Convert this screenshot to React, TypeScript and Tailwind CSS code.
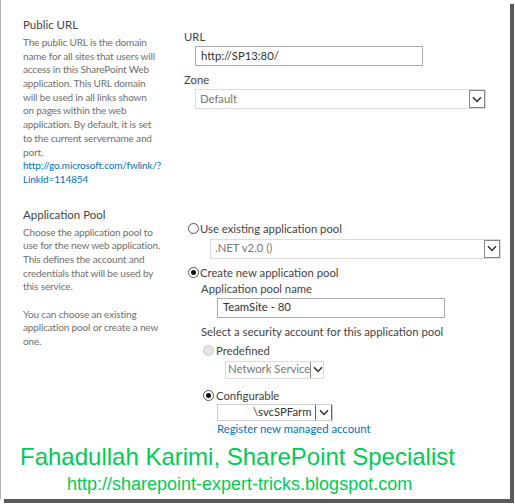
import React from 'react';

const font = { fontFamily: 'Lato, "Open Sans", sans-serif' };
const arial = { fontFamily: '"Liberation Sans", Arial, sans-serif' };

const Chevron = () => (
  <svg width="10" height="7" viewBox="0 0 10 7" fill="none">
    <path d="M1 1.2 L5 5.4 L9 1.2" stroke="#333" strokeWidth="1.5" />
  </svg>
);

const Radio = ({ checked, disabled }: { checked?: boolean; disabled?: boolean }) => (
  <span
    className={
      'w-[11px] h-[11px] rounded-full border flex items-center justify-center shrink-0 ' +
      (disabled ? 'border-[#c8c8c8] bg-[#e4e4e4]' : 'border-[#555] bg-white')
    }
  >
    {checked && <span className="w-[5px] h-[5px] rounded-full bg-[#111]" />}
  </span>
);

const Desc = ({ lines }: { lines: string[] }) => (
  <div className="text-[10px] tracking-[-0.15px] leading-[13.7px] text-[#6f6f6f] whitespace-nowrap">
    {lines.map((l, i) => (
      <div key={i} className="h-[13.7px]">{l}</div>
    ))}
  </div>
);

export default function App() {
  return (
    <div className="w-[515px] h-[504px] bg-white" style={font}>
      <div className="w-[510px] h-[499px] bg-white border-l border-[#b5b5b5] shadow-[4px_4px_0_#5a5a5a] pt-[17px]">
        {/* Public URL section */}
        <div className="flex">
          <div className="w-[183px] pl-[22px]">
            <div className="text-[11.5px] text-[#444] leading-[16px] mb-[3px]">Public URL</div>
            <Desc
              lines={[
                'The public URL is the domain',
                'name for all sites that users will',
                'access in this SharePoint Web',
                'application.  This URL domain',
                'will be used in all links shown',
                'on pages within the web',
                'application.  By default, it is set',
                'to the current servername and',
                'port.',
              ]}
            />
            <div className="text-[10px] tracking-[-0.15px] leading-[13.7px] text-[#0072c6] whitespace-nowrap">
              <div>http://go.microsoft.com/fwlink/?</div>
              <div>LinkId=114854</div>
            </div>
          </div>
          <div className="pt-[12px] text-[11.3px]">
            <div className="text-[#444] leading-[16px]">URL</div>
            <div className="ml-[11px] mt-[1px] w-[228px] h-[20px] border border-[#ababab] flex items-center pl-[5px] text-[#333]">
              http://SP13:80/
            </div>
            <div className="text-[#444] leading-[16px] mt-[6px]">Zone</div>
            <div className="ml-[11px] mt-[1px] w-[291px] h-[20px] border border-[#dcdcdc] flex items-center justify-between text-[#777]">
              <span className="pl-[4px]">Default</span>
              <div className="h-[18px] flex items-center justify-center w-[16px] border border-[#888]">
                <Chevron />
              </div>
            </div>
          </div>
        </div>

        {/* Application Pool section */}
        <div className="flex mt-[20px]">
          <div className="w-[187px] pl-[22px]">
            <div className="text-[11.5px] text-[#444] leading-[16px] mb-[3px]">Application Pool</div>
            <Desc
              lines={[
                'Choose the application pool to',
                'use for the new web application.',
                'This defines the account and',
                'credentials that will be used by',
                'this service.',
                '',
                'You can choose an existing',
                'application pool or create a new',
                'one.',
              ]}
            />
          </div>
          <div className="pt-[14px] text-[11.3px] text-[#444]">
            <div className="flex items-center gap-[1px] leading-[16px]">
              <Radio />
              <span>Use existing application pool</span>
            </div>
            <div className="ml-[22px] mt-[2px] w-[291px] h-[20px] border border-[#dcdcdc] flex items-center justify-between text-[#777]">
              <span className="pl-[4px]">.NET v2.0 ()</span>
              <div className="h-[18px] flex items-center justify-center w-[16px] border border-[#888]">
                <Chevron />
              </div>
            </div>
            <div className="flex items-center gap-[1px] leading-[16px] mt-[6px]">
              <Radio checked />
              <span>Create new application pool</span>
            </div>
            <div className="ml-[13px]">
              <div className="leading-[15px]">Application pool name</div>
              <div className="ml-[16px] mt-[2px] w-[228px] h-[20px] border border-[#ababab] flex items-center pl-[5px] text-[#333]">
                TeamSite - 80
              </div>
              <div className="leading-[16px] mt-[6px]">Select a security account for this application pool</div>
              <div className="ml-[2px] mt-[3px] flex items-center gap-[2px] leading-[16px]">
                <Radio disabled />
                <span>Predefined</span>
              </div>
              <div className="ml-[24px] mt-[2px] w-[99px] h-[18px] border border-[#dcdcdc] flex items-center justify-between text-[#777] overflow-hidden">
                <span className="pl-[2px] whitespace-nowrap">Network Service</span>
                <div className="h-[18px] flex items-center justify-center w-[16px] shrink-0 border border-[#888]">
                  <Chevron />
                </div>
              </div>
              <div className="ml-[2px] mt-[9px] flex items-center gap-[2px] leading-[16px]">
                <Radio checked />
                <span>Configurable</span>
              </div>
              <div className="ml-[16px] w-[116px] h-[17px] border border-[#cfcfcf] flex items-center justify-between text-[#333] overflow-hidden">
                <span className="pl-[35px] whitespace-nowrap">\svcSPFarm</span>
                <div className="h-[17px] flex items-center justify-center w-[17px] shrink-0 border border-[#666]">
                  <Chevron />
                </div>
              </div>
              <div className="ml-[16px] leading-[16px] text-[#0072c6]">Register new managed account</div>
            </div>
          </div>
        </div>

        {/* Footer */}
        <div className="mt-[6px] pl-[19px] text-[24px] leading-[28px] text-[#00cc55] whitespace-nowrap" style={arial}>
          Fahadullah Karimi, SharePoint Specialist
        </div>
        <div className="mt-[3px] pl-[66px] text-[18px] leading-[20px] text-[#00cc55] whitespace-nowrap" style={arial}>
          http://sharepoint-expert-tricks.blogspot.com
        </div>
      </div>
    </div>
  );
}
